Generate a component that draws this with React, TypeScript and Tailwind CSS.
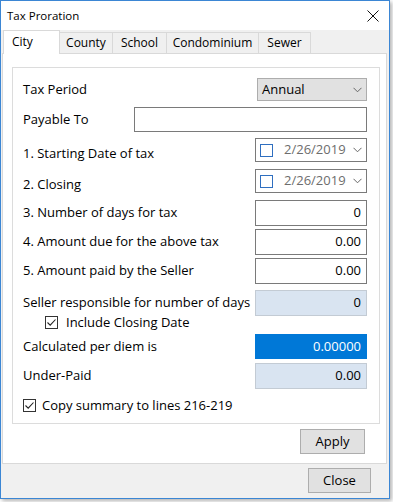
import type { ReactNode } from 'react';

const FONT = "font-['Open_Sans','Noto_Sans',sans-serif]";

function Chevron() {
  return (
    <svg width="9" height="6" viewBox="0 0 9 6" className="shrink-0">
      <path d="M0.5 0.8 L4.5 4.8 L8.5 0.8" fill="none" stroke="#666" strokeWidth="1" />
    </svg>
  );
}

function CheckBox({ checked }: { checked?: boolean }) {
  return (
    <span className="w-[13px] h-[13px] border border-[#333] bg-white flex items-center justify-center shrink-0">
      {checked && (
        <svg width="11" height="11" viewBox="0 0 11 11">
          <path d="M1.5 5.5 L4.2 8.2 L9.5 2.5" fill="none" stroke="#222" strokeWidth="1.1" />
        </svg>
      )}
    </span>
  );
}

function DatePicker() {
  return (
    <div className="w-[112px] h-[24px] border border-[#7a7a7a] bg-white flex items-center pl-[4px] pr-[4px]">
      <span className="w-[13px] h-[13px] border border-[#2f6fc0]" />
      <span className="ml-[11px] text-[#6d6d6d]">2/26/2019</span>
      <span className="ml-auto"><Chevron /></span>
    </div>
  );
}

function Field({ value, tone = 'white' }: { value: string; tone?: 'white' | 'ro' | 'sel' }) {
  const cls =
    tone === 'sel' ? 'bg-[#0078d7] border-[#0078d7] text-white' :
    tone === 'ro'  ? 'bg-[#d9e4f1] border-[#c3cbd4] text-black' :
    'bg-white border-[#7a7a7a] text-black';
  return (
    <div className={`w-[112px] h-full border flex items-center justify-end pr-[5px] ${cls}`}>
      {value}
    </div>
  );
}

function Row({ label, h, mt, children, low }: { label: string; h: number; mt: number; children: ReactNode; low?: boolean }) {
  return (
    <div className="flex items-center justify-between" style={{ height: h, marginTop: mt }}>
      <span className={low ? 'pt-[7px]' : ''}>{label}</span>
      {children}
    </div>
  );
}

const TABS = [
  { label: 'County', w: 'w-[53px]' },
  { label: 'School', w: 'w-[54px]' },
  { label: 'Condominium', w: 'w-[92px]' },
  { label: 'Sewer', w: 'w-[52px]' },
];

export default function App() {
  return (
    <div className={`w-[393px] h-[502px] bg-white ${FONT} text-[13px] text-black`}>
      <div className="w-[390px] h-[499px] border border-[#3b86d4] bg-[#f0f0f0] flex flex-col shadow-[2px_2px_4px_rgba(0,0,0,0.3)]">
        {/* Title bar */}
        <div className="h-[29px] bg-white flex items-center pl-[6px] pr-[10px] shrink-0">
          <span className="text-[11.5px]">Tax Proration</span>
          <svg width="12" height="12" viewBox="0 0 12 12" className="ml-auto">
            <path d="M0.5 0.5 L11.5 11.5 M11.5 0.5 L0.5 11.5" stroke="#111" strokeWidth="1" />
          </svg>
        </div>

        {/* Tabs */}
        <div className="flex items-end h-[23px] pl-[2px] shrink-0 text-[12px] relative z-10">
          <div className="h-[24px] w-[57px] bg-white border border-b-0 border-[#d9d9d9] -mb-px flex items-start pt-[2px] pl-[8px]">
            City
          </div>
          {TABS.map((t) => (
            <div key={t.label} className={`h-[21px] ${t.w} bg-[#f0f0f0] border border-l-0 border-b-0 border-[#d9d9d9] flex items-center justify-center`}>
              {t.label}
            </div>
          ))}
        </div>

        {/* Tab page */}
        <div className="mx-[1px] mr-[2px] h-[411px] bg-white border border-[#d9d9d9] flex flex-col shrink-0">
          <div className="ml-[9px] mr-[6px] mt-[13px] h-[357px] border border-[#dcdcdc] pl-[10px] pr-[12px] pt-[10px] flex flex-col">
            <Row label="Tax Period" h={23} mt={0}>
              <div className="w-[110px] h-full bg-[#e1e1e1] border border-[#adadad] flex items-center pl-[4px] pr-[4px]">
                Annual
                <span className="ml-auto"><Chevron /></span>
              </div>
            </Row>
            <Row label="Payable To" h={25} mt={6}>
              <div className="w-[233px] h-full bg-white border border-[#7a7a7a]" />
            </Row>
            <Row label="1. Starting Date of tax" h={24} mt={6} low>
              <DatePicker />
            </Row>
            <Row label="2. Closing" h={24} mt={7} low>
              <DatePicker />
            </Row>
            <Row label="3. Number of days for tax" h={26} mt={7}>
              <Field value="0" />
            </Row>
            <Row label="4. Amount due for the above tax" h={26} mt={3}>
              <Field value="0.00" />
            </Row>
            <Row label="5. Amount paid by the Seller" h={26} mt={3}>
              <Field value="0.00" />
            </Row>
            <Row label="Seller responsible for number of days" h={26} mt={6}>
              <Field value="0" tone="ro" />
            </Row>
            <div className="flex items-center h-[13px] pl-[22px] gap-[8px]">
              <CheckBox checked />
              <span>Include Closing Date</span>
            </div>
            <Row label="Calculated per diem is" h={25} mt={5}>
              <Field value="0.00000" tone="sel" />
            </Row>
            <Row label="Under-Paid" h={26} mt={4}>
              <Field value="0.00" tone="ro" />
            </Row>
            <div className="flex items-center h-[13px] mt-[10px] gap-[6px]">
              <CheckBox checked />
              <span>Copy summary to lines 216-219</span>
            </div>
          </div>
          <div className="flex justify-end mt-[5px] mr-[21px]">
            <button className="w-[65px] h-[25px] bg-[#e1e1e1] border border-[#adadad]">Apply</button>
          </div>
        </div>

        {/* Footer */}
        <div className="flex-1 flex justify-end items-start pt-[4px] pr-[18px]">
          <button className="w-[63px] h-[25px] bg-[#e1e1e1] border border-[#adadad]">Close</button>
        </div>
      </div>
    </div>
  );
}
